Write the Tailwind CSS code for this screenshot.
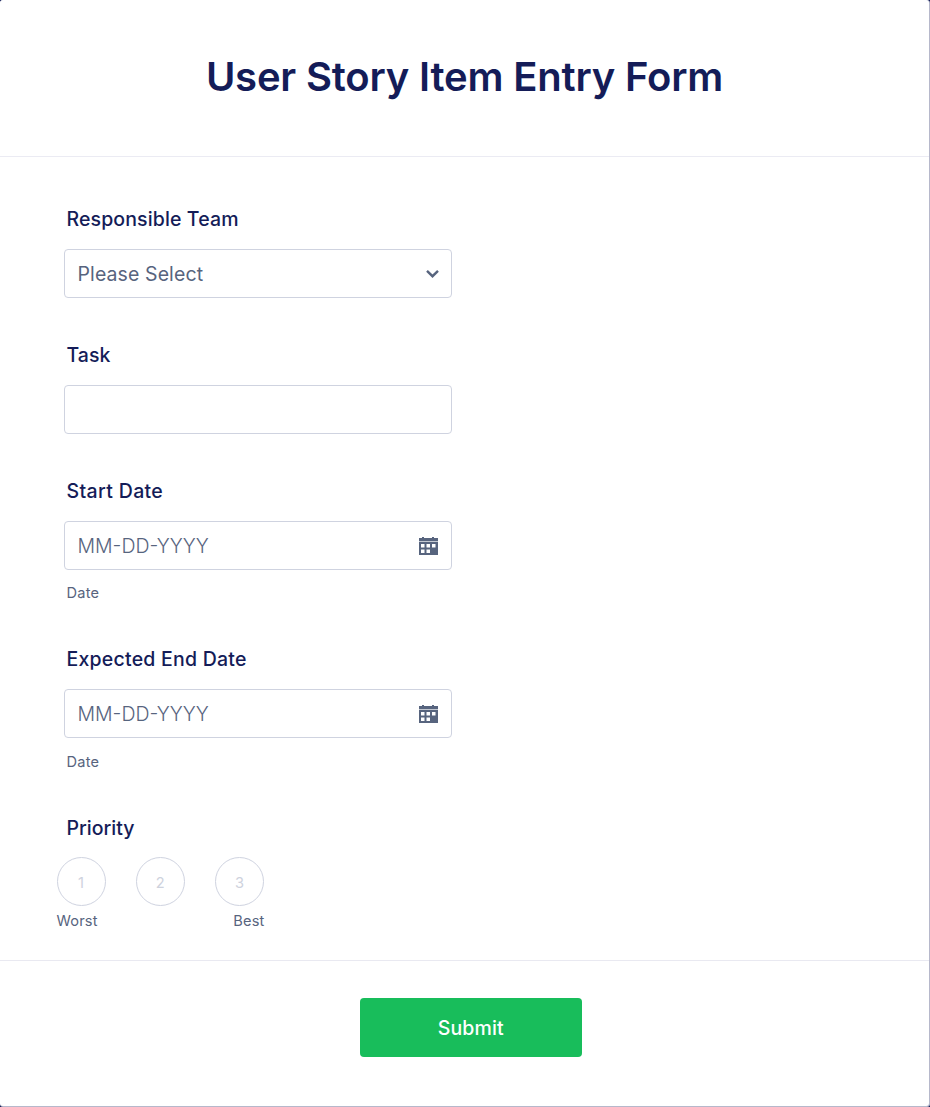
<!DOCTYPE html>
<html lang="en">
<head>
<meta charset="utf-8">
<title>User Story Item Entry Form</title>
<script src="https://cdn.jsdelivr.net/npm/@tailwindcss/browser@4"></script>
</head>
<body class="h-[1107px] w-[930px] overflow-hidden bg-[#0a1551] font-['Inter',sans-serif]">
<div class="h-[1107px] w-[930px] rounded-[3px] bg-[#b6b8cb]">
<form class="flex h-[1106px] w-[929px] flex-col rounded-[3px] bg-white text-[#141c58]">
  <header class="flex h-[157px] shrink-0 justify-center border-b border-[#ebebf3] pt-[52px]">
    <h1 class="text-[40px] leading-[50px] font-semibold tracking-[-0.19px] whitespace-nowrap">User Story Item Entry Form</h1>
  </header>
  <main class="h-[804px] shrink-0 border-b border-[#e9e9f1] pt-[50px] pl-[64px]">
    <section class="h-[136px]">
      <label class="block h-[42px] pl-[2.500px] text-[19.5px] leading-6 font-medium tracking-[0.12px]">Responsible Team</label>
      <div class="flex h-[49px] w-[388px] items-center justify-between rounded-[4px] border border-[#cfd3e0] pr-3 pl-[12.500px] text-[19.5px] text-[#57647e]">
        <span class="pt-[2px] tracking-[0.1px]">Please Select</span>
        <svg class="h-[14px] w-[14px]" viewBox="0 0 14 14" fill="none" stroke="currentColor" stroke-width="2.4"><path d="M2 3.800 7.500 9.200 13 3.800"/></svg>
      </div>
    </section>
    <section class="h-[136px]">
      <label class="block h-[42px] pl-[2.500px] text-[19.5px] leading-6 font-medium">Task</label>
      <div class="h-[49px] w-[388px] rounded-[4px] border border-[#cfd3e0]"></div>
    </section>
    <section class="h-[168px]">
      <label class="block h-[42px] pl-[2.500px] text-[19.5px] leading-6 font-medium tracking-[0.35px]">Start Date</label>
      <div class="flex h-[49px] w-[388px] items-center justify-between rounded-[4px] border border-[#cfd3e0] pr-[13px] pl-[12.500px] text-[19.5px] font-light text-[#57647e]">
        <span class="pt-[2px]">MM-DD-YYYY</span>
        <svg class="h-5 w-5" viewBox="0 0 20 20" fill="currentColor"><path d="M4 1h2v1H4zM14 1h2v1h-2zM1 2h19v3H1z"/><path d="M1 5h19v1H1z" opacity=".35"/><path fill-rule="evenodd" d="M1 6h19v13H1zM3 8v3.500h3.500V8zm5.500 0v3.500H12V8zM14 8v3.500h3.500V8zM3 13.500V17h3.500v-3.500zm5.500 0V17H12v-3.500z"/></svg>
      </div>
      <p class="mt-[11px] pl-[2.500px] text-[14.600px] leading-6 tracking-[0.2px] text-[#57647e]">Date</p>
    </section>
    <section class="h-[169px]">
      <label class="block h-[42px] pl-[2.500px] text-[19.5px] leading-6 font-medium tracking-[0.22px]">Expected End Date</label>
      <div class="flex h-[49px] w-[388px] items-center justify-between rounded-[4px] border border-[#cfd3e0] pr-[13px] pl-[12.500px] text-[19.5px] font-light text-[#57647e]">
        <span class="pt-[2px]">MM-DD-YYYY</span>
        <svg class="h-5 w-5" viewBox="0 0 20 20" fill="currentColor"><path d="M4 1h2v1H4zM14 1h2v1h-2zM1 2h19v3H1z"/><path d="M1 5h19v1H1z" opacity=".35"/><path fill-rule="evenodd" d="M1 6h19v13H1zM3 8v3.500h3.500V8zm5.500 0v3.500H12V8zM14 8v3.500h3.500V8zM3 13.500V17h3.500v-3.500zm5.500 0V17H12v-3.500z"/></svg>
      </div>
      <p class="mt-3 pl-[2.500px] text-[14.600px] leading-6 tracking-[0.2px] text-[#57647e]">Date</p>
    </section>
    <section>
      <label class="block h-[41px] pl-[2.500px] text-[19.5px] leading-6 font-medium">Priority</label>
      <div class="-ml-[7.500px] flex w-[207.500px] justify-between text-[14.600px] text-[#ced2dd]">
        <span class="grid size-[49px] place-items-center rounded-full border border-[#cfd3e0] pt-[4px]">1</span>
        <span class="grid size-[49px] place-items-center rounded-full border border-[#cfd3e0] pt-[4px]">2</span>
        <span class="grid size-[49px] place-items-center rounded-full border border-[#cfd3e0] pt-[4px]">3</span>
      </div>
      <div class="-ml-[7.500px] mt-[3px] flex w-[208px] justify-between text-[14.600px] leading-6 tracking-[0.15px] text-[#57647e]"><span>Worst</span><span>Best</span></div>
    </section>
  </main>
  <footer class="flex pt-[37px] pl-[359.600px]">
    <button type="button" class="h-[59px] w-[222.400px] rounded-[4px] bg-[#18bd5b] pt-[2px] text-[19.5px] font-medium tracking-[0.15px] text-white">Submit</button>
  </footer>
</form>
</div>
</body>
</html>
